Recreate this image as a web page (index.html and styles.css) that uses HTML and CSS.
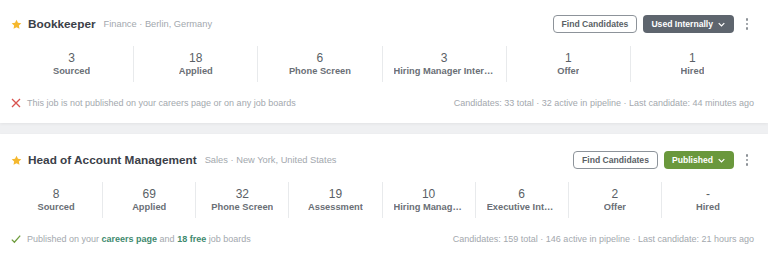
FILE: index.html
```html
<!DOCTYPE html>
<html lang="en">
<head>
  <meta charset="UTF-8">
  <title>Jobs</title>
  <link rel="stylesheet" href="styles.css">
</head>
<body>
  <div class="job-list">

    <!-- Bookkeeper -->
    <div class="job-card">
      <div class="job-header">
        <svg class="star" viewBox="0 0 24 24" width="11" height="11"><path d="M12 1.5l3.2 6.6 7.3 1-5.3 5.1 1.3 7.3L12 18l-6.5 3.5 1.3-7.3-5.3-5.1 7.3-1z" fill="#f5b82e"/></svg>
        <h2 class="job-title">Bookkeeper</h2>
        <span class="job-meta">Finance · Berlin, Germany</span>
        <div class="job-actions">
          <button class="btn btn-outline">Find Candidates</button>
          <button class="btn btn-status internal">Used Internally
            <svg viewBox="0 0 10 6" width="7" height="5"><path d="M1 1l4 4 4-4" fill="none" stroke="#fff" stroke-width="1.8"/></svg>
          </button>
          <span class="kebab"><i></i><i></i><i></i></span>
        </div>
      </div>
      <div class="stages">
        <div class="stage"><b>3</b><span>Sourced</span></div>
        <div class="stage"><b>18</b><span>Applied</span></div>
        <div class="stage"><b>6</b><span>Phone Screen</span></div>
        <div class="stage"><b>3</b><span>Hiring Manager Interview</span></div>
        <div class="stage"><b>1</b><span>Offer</span></div>
        <div class="stage"><b>1</b><span>Hired</span></div>
      </div>
      <div class="job-footer">
        <div class="status">
          <svg viewBox="0 0 10 10" width="10" height="10"><path d="M1 1l8 8M9 1l-8 8" stroke="#d9534f" stroke-width="1.3"/></svg>
          <span>This job is not published on your careers page or on any job boards</span>
        </div>
        <span class="summary">Candidates: 33 total · 32 active in pipeline · Last candidate: 44 minutes ago</span>
      </div>
    </div>

    <!-- Head of Account Management -->
    <div class="job-card">
      <div class="job-header">
        <svg class="star" viewBox="0 0 24 24" width="11" height="11"><path d="M12 1.5l3.2 6.6 7.3 1-5.3 5.1 1.3 7.3L12 18l-6.5 3.5 1.3-7.3-5.3-5.1 7.3-1z" fill="#f5b82e"/></svg>
        <h2 class="job-title">Head of Account Management</h2>
        <span class="job-meta">Sales · New York, United States</span>
        <div class="job-actions">
          <button class="btn btn-outline">Find Candidates</button>
          <button class="btn btn-status published">Published
            <svg viewBox="0 0 10 6" width="7" height="5"><path d="M1 1l4 4 4-4" fill="none" stroke="#fff" stroke-width="1.8"/></svg>
          </button>
          <span class="kebab"><i></i><i></i><i></i></span>
        </div>
      </div>
      <div class="stages">
        <div class="stage"><b>8</b><span>Sourced</span></div>
        <div class="stage"><b>69</b><span>Applied</span></div>
        <div class="stage"><b>32</b><span>Phone Screen</span></div>
        <div class="stage"><b>19</b><span>Assessment</span></div>
        <div class="stage"><b>10</b><span>Hiring Manager Interview</span></div>
        <div class="stage"><b>6</b><span>Executive Interview</span></div>
        <div class="stage"><b>2</b><span>Offer</span></div>
        <div class="stage"><b>-</b><span>Hired</span></div>
      </div>
      <div class="job-footer">
        <div class="status">
          <svg viewBox="0 0 10 10" width="10" height="10"><path d="M0.8 5.6l2.6 2.6L9.2 1.6" fill="none" stroke="#6f9d3e" stroke-width="1.3"/></svg>
          <span>Published on your <a href="#">careers page</a> and <a href="#">18 free</a> job boards</span>
        </div>
        <span class="summary">Candidates: 159 total · 146 active in pipeline · Last candidate: 21 hours ago</span>
      </div>
    </div>

  </div>
</body>
</html>
```

FILE: styles.css
```css
* {
  margin: 0;
  padding: 0;
  box-sizing: border-box;
}

body {
  margin-top: -2px;
  background: #eff0f2;
  font-family: 'Liberation Sans', Arial, sans-serif;
  color: #555a61;
}

.job-list {
  display: flex;
  flex-direction: column;
  gap: 11px;
}

.job-card {
  background: #fff;
  padding: 15px 14px 13px 10px;
  box-shadow: 0 1px 3px rgba(0, 0, 0, 0.06);
}

/* header */
.job-header {
  display: flex;
  align-items: center;
  height: 22px;
}

.star {
  margin: 0 6px 0 1px;
}

.job-title {
  font-size: 11.8px;
  font-weight: 700;
  color: #3b4048;
}

.job-meta {
  margin-left: 8px;
  font-size: 9.3px;
  color: #a3a8ae;
}

.job-actions {
  margin-left: auto;
  display: flex;
  align-items: center;
  gap: 6px;
}

.btn {
  height: 18px;
  padding: 0 8px;
  font-family: inherit;
  font-size: 8.6px;
  font-weight: 700;
  border-radius: 4px;
  display: flex;
  align-items: center;
  gap: 5px;
}

.btn-outline {
  background: #fff;
  color: #5a5f66;
  border: 1px solid #8d939a;
}

.btn-status {
  color: #fff;
  border: none;
  padding-right: 9px;
}

.btn-status.internal {
  background: #5e656e;
}

.btn-status.published {
  background: #6a983c;
}

.kebab {
  width: 14px;
  display: flex;
  flex-direction: column;
  align-items: center;
  gap: 2px;
}

.kebab i {
  width: 2.5px;
  height: 2.5px;
  border-radius: 50%;
  background: #8b9096;
}

/* pipeline stages */
.stages {
  display: flex;
  margin-top: 11px;
  height: 36px;
}

.stage {
  flex: 1;
  min-width: 0;
  display: flex;
  flex-direction: column;
  align-items: center;
  justify-content: center;
  padding: 0 11px;
  border-left: 1px solid #e8eaec;
}

.stage:first-child {
  border-left: none;
}

.stage b {
  font-size: 12px;
  font-weight: 400;
  line-height: 14px;
  color: #5a5f66;
}

.stage span {
  max-width: 100%;
  font-size: 9.3px;
  font-weight: 700;
  line-height: 12px;
  color: #6a6f76;
  white-space: nowrap;
  overflow: hidden;
  text-overflow: ellipsis;
}

/* footer */
.job-footer {
  display: flex;
  justify-content: space-between;
  align-items: center;
  margin-top: 14px;
  height: 14px;
  font-size: 9px;
  color: #a3a8ae;
}

.status {
  display: flex;
  align-items: center;
  gap: 6px;
  padding-left: 1px;
}

.status a {
  color: #3f8a6f;
  font-weight: 700;
  text-decoration: none;
}
```
